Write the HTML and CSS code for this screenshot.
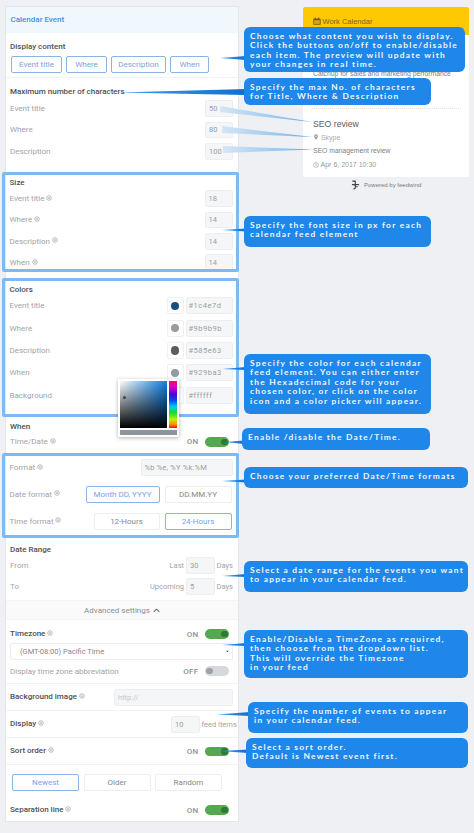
FILE: index.html
```html
<!DOCTYPE html>
<html lang="en">
<head>
<meta charset="utf-8">
<title>Calendar Event</title>
<link rel="stylesheet" href="styles.css">
</head>
<body>
<div class="page">
  <main class="panel">
    <h1 class="panel-title">Calendar Event</h1>

    <section class="sec sec-display">
      <h2 class="label">Display content</h2>
      <div class="btns">
        <span class="btn on w51">Event title</span>
        <span class="btn on w41">Where</span>
        <span class="btn on w55">Description</span>
        <span class="btn on w39">When</span>
      </div>
    </section>

    <section class="sec sec-max">
      <h2 class="label">Maximum number of characters</h2>
      <div class="row r1"><span class="txt">Event title</span><span class="input num">50</span></div>
      <div class="row r1"><span class="txt">Where</span><span class="input num">80</span></div>
      <div class="row r1"><span class="txt">Description</span><span class="input num">100</span></div>
    </section>

    <section class="frame frame-size">
      <h2 class="label">Size</h2>
      <div class="row r1"><span class="txt">Event title <svg class="help" viewBox="0 0 10 10"><circle cx="5" cy="5" r="3.8"/><circle class="dot" cx="5" cy="5" r="1.4"/></svg></span><span class="input num">18</span></div>
      <div class="row r1"><span class="txt">Where <svg class="help" viewBox="0 0 10 10"><circle cx="5" cy="5" r="3.8"/><circle class="dot" cx="5" cy="5" r="1.4"/></svg></span><span class="input num">14</span></div>
      <div class="row r1"><span class="txt">Description <svg class="help" viewBox="0 0 10 10"><circle cx="5" cy="5" r="3.8"/><circle class="dot" cx="5" cy="5" r="1.4"/></svg></span><span class="input num">14</span></div>
      <div class="row r1"><span class="txt">When <svg class="help" viewBox="0 0 10 10"><circle cx="5" cy="5" r="3.8"/><circle class="dot" cx="5" cy="5" r="1.4"/></svg></span><span class="input num">14</span></div>
    </section>

    <section class="frame frame-colors">
      <h2 class="label">Colors</h2>
      <div class="row r2"><span class="txt">Event title</span><span class="swatch"><i class="c1"></i></span><span class="input hex">#1c4e7d</span></div>
      <div class="row r2"><span class="txt">Where</span><span class="swatch"><i class="c2"></i></span><span class="input hex">#9b9b9b</span></div>
      <div class="row r2"><span class="txt">Description</span><span class="swatch"><i class="c3"></i></span><span class="input hex">#585e63</span></div>
      <div class="row r2"><span class="txt">When</span><span class="swatch"><i class="c4"></i></span><span class="input hex">#929ba3</span></div>
      <div class="row r2"><span class="txt">Background</span><span class="swatch"><i class="c5"></i></span><span class="input hex">#ffffff</span></div>
      <div class="picker">
        <div class="picker-top">
          <div class="picker-sat"><i class="picker-dot"></i></div>
          <div class="picker-hue"></div>
        </div>
        <div class="picker-bar"></div>
      </div>
    </section>

    <section class="sec sec-when">
      <h2 class="label">When</h2>
      <div class="row rt"><span class="txt">Time/Date <svg class="help" viewBox="0 0 10 10"><circle cx="5" cy="5" r="3.8"/><circle class="dot" cx="5" cy="5" r="1.4"/></svg></span><span class="state">ON</span><span class="toggle"></span></div>
    </section>

    <section class="frame frame-format">
      <div class="row rf1"><span class="txt">Format <svg class="help" viewBox="0 0 10 10"><circle cx="5" cy="5" r="3.8"/><circle class="dot" cx="5" cy="5" r="1.4"/></svg></span><span class="input fmt">%b %e, %Y %k:%M</span></div>
      <div class="row rf2"><span class="txt">Date format <svg class="help" viewBox="0 0 10 10"><circle cx="5" cy="5" r="3.8"/><circle class="dot" cx="5" cy="5" r="1.4"/></svg></span><span class="btn on w74">Month DD, YYYY</span><span class="btn w67">DD.MM.YY</span></div>
      <div class="row rf2"><span class="txt">Time format <svg class="help" viewBox="0 0 10 10"><circle cx="5" cy="5" r="3.8"/><circle class="dot" cx="5" cy="5" r="1.4"/></svg></span><span class="btn w66">12-Hours</span><span class="btn on w67">24-Hours</span></div>
    </section>

    <section class="sec sec-range">
      <h2 class="label">Date Range</h2>
      <div class="row r1"><span class="txt">From</span><span class="pre">Last</span><span class="input days">30</span><span class="post">Days</span></div>
      <div class="row r1"><span class="txt">To</span><span class="pre">Upcoming</span><span class="input days">5</span><span class="post">Days</span></div>
    </section>

    <div class="advanced">Advanced settings <svg class="chev" viewBox="0 0 10 6"><path d="M1 5 L5 1.2 L9 5"/></svg></div>

    <section class="sec sec-tz">
      <div class="row rt"><span class="label inline">Timezone <svg class="help" viewBox="0 0 10 10"><circle cx="5" cy="5" r="3.8"/><circle class="dot" cx="5" cy="5" r="1.4"/></svg></span><span class="state">ON</span><span class="toggle"></span></div>
      <div class="select"><span>(GMT-08:00) Pacific Time</span><svg class="caret" viewBox="0 0 6 4"><path d="M0.5 0.5 H5.5 L3 3.5 Z"/></svg></div>
      <div class="row rt abbr"><span class="txt">Display time zone abbreviation</span><span class="state">OFF</span><span class="toggle off"></span></div>
    </section>

    <section class="sec line"><div class="row rb"><span class="label inline">Background image <svg class="help" viewBox="0 0 10 10"><circle cx="5" cy="5" r="3.8"/><circle class="dot" cx="5" cy="5" r="1.4"/></svg></span><span class="input url">http://</span></div></section>
    <section class="sec line"><div class="row rb"><span class="label inline">Display <svg class="help" viewBox="0 0 10 10"><circle cx="5" cy="5" r="3.8"/><circle class="dot" cx="5" cy="5" r="1.4"/></svg></span><span class="input days">10</span><span class="post feed">feed items</span></div></section>
    <section class="sec line"><div class="row rb"><span class="label inline">Sort order <svg class="help" viewBox="0 0 10 10"><circle cx="5" cy="5" r="3.8"/><circle class="dot" cx="5" cy="5" r="1.4"/></svg></span><span class="state">ON</span><span class="toggle"></span></div></section>

    <section class="sec sec-sort">
      <div class="btns sort"><span class="btn on w67">Newest</span><span class="btn w67">Older</span><span class="btn w67">Random</span></div>
      <div class="row rt sep"><span class="label inline">Separation line <svg class="help" viewBox="0 0 10 10"><circle cx="5" cy="5" r="3.8"/><circle class="dot" cx="5" cy="5" r="1.4"/></svg></span><span class="state">ON</span><span class="toggle"></span></div>
    </section>
  </main>

  <aside class="preview">
    <div class="card">
      <div class="card-head">
        <svg class="cal" viewBox="0 0 10 10"><path d="M1 2h8a.6.6 0 0 1 .6.6V9a.6.6 0 0 1-.6.6H1A.6.6 0 0 1 .4 9V2.6A.6.6 0 0 1 1 2z"/><rect x="2.2" y=".6" width="1.3" height="2.2"/><rect x="6.5" y=".6" width="1.3" height="2.2"/><rect class="cal-in" x="1.4" y="4" width="7.2" height="4.6"/></svg>
        Work Calendar
      </div>
      <div class="card-body">
        <p class="ev-desc first">Catchup for sales and marketing performance</p>
        <div class="dots"></div>
        <p class="ev-title">SEO review</p>
        <p class="ev-where"><svg class="mini" viewBox="0 0 10 10"><path d="M5 .5a3.2 3.2 0 0 0-3.2 3.2C1.8 6 5 9.6 5 9.6S8.200 6 8.200 3.700A3.200 3.200 0 0 0 5 .5zm0 4.300a1.200 1.200 0 1 1 0-2.400 1.200 1.200 0 0 1 0 2.400z"/></svg> Skype</p>
        <p class="ev-desc">SEO management review</p>
        <p class="ev-when"><svg class="mini clock" viewBox="0 0 10 10"><circle cx="5" cy="5" r="4"/><path d="M5 2.600V5.200L6.800 6.200"/></svg> Apr 6, 2017 10:30</p>
      </div>
    </div>
    <div class="powered">
      <svg class="fw" viewBox="0 0 12 14"><path d="M1.500 1.500H6.500M3.500 1.500C5.500 1.500 6 3 6 4S5 6.500 3.500 6.500M1 6.500H6M6 6.500H11M3.500 6.500C5.500 6.500 6 8.500 6 9.500S5 12.500 3 12.500M6 9.500H9"/></svg>
      <span>Powered by feedwind</span>
    </div>
  </aside>

  <svg class="links" viewBox="0 0 474 833" aria-hidden="true">
    <defs>
      <linearGradient id="fade" x1="0" x2="1" y1="0" y2="0">
        <stop offset="0" stop-color="#d5e6f5"/>
        <stop offset="0.75" stop-color="#8fc0ee"/>
        <stop offset="1" stop-color="#3f8ddc"/>
      </linearGradient>
      <linearGradient id="solid" x1="0" x2="1" y1="0" y2="0">
        <stop offset="0" stop-color="#3f9cf0"/>
        <stop offset="1" stop-color="#0f6fd0"/>
      </linearGradient>
    </defs>
    <polygon fill="url(#fade)" points="220,106 312,122 220,112"/>
    <polygon fill="url(#fade)" points="222,126 312,137 222,133"/>
    <polygon fill="url(#fade)" points="223,146 313,149.500 223,153"/>
    <polygon fill="url(#solid)" points="220,58 246,56 246,60"/>
    <polygon fill="url(#solid)" points="118,92.500 246,89 246,95"/>
    <polygon fill="url(#solid)" points="222,230 246,228.500 246,231.500"/>
    <polygon fill="url(#solid)" points="222,369 246,367 246,370"/>
    <polygon fill="url(#solid)" points="225,442 244,440.500 244,444"/>
    <polygon fill="url(#solid)" points="222,481 246,479.500 246,482.500"/>
    <polygon fill="url(#solid)" points="222,576 246,574 246,577"/>
    <polygon fill="url(#solid)" points="222,645 246,643 246,646"/>
    <polygon fill="url(#solid)" points="217,714.500 250,712 250,716"/>
    <polygon fill="url(#solid)" points="220,751 248,749.500 248,753"/>
  </svg>

  <div class="note n1">Choose what content you wish to display.<br>Click the buttons on/off to enable/disable<br>each item. The preview will update with<br>your changes in real time.</div>
  <div class="note n2">Specify the max No. of characters<br>for Title, Where &amp; Description</div>
  <div class="note n3">Specify the font size in px for each<br>calendar feed element</div>
  <div class="note n4">Specify the color for each calendar<br>feed element. You can either enter<br>the Hexadecimal code for your<br>chosen color, or click on the color<br>icon and a color picker will appear.</div>
  <div class="note n5">Enable /disable the Date/Time.</div>
  <div class="note n6">Choose your preferred Date/Time formats</div>
  <div class="note n7">Select a date range for the events you want<br>to appear in your calendar feed.</div>
  <div class="note n8">Enable/Disable a TimeZone as required,<br>then choose from the dropdown list.<br>This will override the Timezone<br>in your feed</div>
  <div class="note n9">Specify the number of events to appear<br>in your calendar feed.</div>
  <div class="note n10">Select a sort order.<br>Default is Newest event first.</div>
</div>
</body>
</html>
```

FILE: styles.css
```css
* { box-sizing: border-box; }
html, body { margin: 0; padding: 0; }
body { background: #eef0f3; font-family: Roboto, "Liberation Sans", sans-serif; color: #a0a4a8; }
p, h1, h2 { margin: 0; font-weight: normal; }

.page { position: relative; width: 474px; height: 833px; overflow: hidden; display: flex; align-items: flex-start; padding: 6px 0 0 5px; }

/* left settings panel */
.panel { width: 234px; height: 816px; flex: none; background: #fff; border: 1px solid #e4e6e9; font-size: 8px; }
.panel-title { height: 26px; line-height: 25px; padding-left: 4.500px; background: #f0f7fd; color: #4a8fd8; font-size: 8px; font-weight: 500; }
.sec { padding: 0 5px 0 4px; }
.label { display: block; height: 12px; line-height: 12px; color: #4c4f53; font-size: 8px; font-weight: 500; }
.label.inline { display: inline-block; flex: 1; }
.txt { flex: 1; white-space: nowrap; }
.row { display: flex; align-items: center; }
.r1 { height: 16.500px; margin-bottom: 4.900px; }
.r2 { height: 17px; margin-bottom: 5.400px; }
.rt { height: 14px; }
.help { width: 6px; height: 6px; vertical-align: 0.5px; fill: none; stroke: #9aa0a5; stroke-width: 1.2; }
.help .dot { fill: #9aa0a5; stroke: none; }

.btns { display: flex; gap: 4px; }
.btn { display: flex; align-items: center; justify-content: center; height: 17px; flex: none; border: 1px solid #eceef0; border-radius: 2px; background: #fff; color: #85888c; font-size: 8px; white-space: nowrap; }
.btn.on { border-color: #8cb4e2; color: #7ba3dc; }
.w39 { width: 39px; } .w41 { width: 41px; } .w51 { width: 51px; } .w55 { width: 55px; }
.w66 { width: 66px; } .w67 { width: 67px; } .w74 { width: 74px; }

.input { display: flex; align-items: center; height: 100%; flex: none; background: #f5f6f7; border: 1px solid #eceef0; border-radius: 2px; padding-left: 3px; color: #9a9ea3; font-size: 7.500px; white-space: nowrap; }
.num { width: 28px; }
.hex { width: 47px; padding-left: 2px; letter-spacing: 0.500px; }
.fmt { width: 92px; letter-spacing: 0.200px; }
.days { width: 29px; }
.url { width: 119px; color: #c5c8cc; }

.sec-display { height: 45px; padding-top: 7.500px; border-bottom: 1px solid #f1f2f4; }
.sec-display .btns { margin: 3.500px 0 0 1px; }
.sec-max { height: 94px; padding-top: 8.300px; }
.sec-max .label { margin-bottom: 2px; }

/* blue highlight frames */
.frame { position: relative; margin: 0 -1px 0 -4px; padding: 0 3.500px 0 4.500px; border: 3.500px solid #7db9f2; border-radius: 2px; }
.frame-size { height: 100px; overflow: hidden; padding-top: 1.800px; }
.frame-size .label { margin-bottom: 1.500px; }
.frame-colors { height: 139px; margin-top: 6px; padding-top: 2.800px; }
.frame-colors .label { margin-bottom: 1.500px; }
.frame-format { height: 85px; padding-top: 3px; }
.frame-format .rf2 { padding-right: 1px; }
.swatch { display: flex; align-items: center; justify-content: center; width: 17px; height: 100%; flex: none; margin-right: 2px; background: #fff; border: 1px solid #eff0f2; border-radius: 2px; }
.swatch i { display: block; width: 8.500px; height: 8.500px; border-radius: 50%; }
.c1 { background: #1c4e7d; } .c2 { background: #9b9b9b; } .c3 { background: #585e63; } .c4 { background: #929ba3; } .c5 { background: #fff; }

.picker { position: absolute; left: 112.500px; top: 97.500px; width: 61px; height: 58px; padding: 2px; background: #fff; box-shadow: 0 1px 4px rgba(0,0,0,.3); z-index: 2; }
.picker-top { display: flex; gap: 2px; height: 47px; }
.picker-sat { position: relative; width: 47px; background: linear-gradient(to bottom, transparent, #000), linear-gradient(to right, #fff, #0a7fe6); }
.picker-dot { position: absolute; left: 3px; top: 15px; width: 3px; height: 3px; border-radius: 50%; background: #444; }
.picker-hue { width: 8px; background: linear-gradient(to bottom, #f01050 0%, #e000c0 12%, #5000e0 28%, #0050f0 42%, #00d0e0 55%, #10e030 68%, #c0f000 82%, #ff9000 92%, #f01000 100%); }
.picker-bar { height: 5px; margin-top: 2.500px; background: #8d949b; }

.sec-when { height: 36px; padding-top: 3.700px; }
.sec-when .label { margin-bottom: 2.300px; }
.state { color: #8e9296; font-size: 8px; font-weight: 500; margin-right: 6px; letter-spacing: 0.300px; }
.toggle { position: relative; width: 24px; height: 9.500px; flex: none; margin-right: 4.500px; border-radius: 5px; background: #55a84f; }
.toggle::after { content: ""; position: absolute; right: 1px; top: 1.500px; width: 6.500px; height: 6.500px; border-radius: 50%; background: #2b7a3a; }
.toggle.off { background: #d6d8db; }
.toggle.off::after { right: auto; left: 1.500px; background: #9fa2a5; }

.rf1 { height: 17px; margin-bottom: 9.500px; }
.rf2 { height: 17px; margin-bottom: 10px; gap: 5px; }

.sec-range { height: 62px; padding-top: 5.700px; }
.sec-range .label { margin-bottom: 1.500px; }
.sec-range .r1 { margin-bottom: 4.500px; }
.pre { margin-right: 2px; font-size: 7.500px; }
.post { width: 16.500px; margin-left: 1.500px; font-size: 7.500px; text-align: left; white-space: nowrap; }
.post.feed { width: 31.500px; }

.advanced { display: flex; align-items: center; justify-content: center; gap: 3px; height: 20px; background: #fafafa; border-top: 1px solid #f3f4f5; border-bottom: 1px solid #f3f4f5; color: #8a8e92; font-size: 8px; }
.chev { width: 7px; height: 5px; fill: none; stroke: #666a6e; stroke-width: 1.500; }

.sec-tz { height: 63.500px; padding-top: 7px; border-bottom: 1px solid #f1f2f4; }
.select { display: flex; align-items: center; justify-content: space-between; height: 17px; margin-top: 2px; padding: 0 3px 0 9px; background: #fff; border: 1px solid #eceef0; border-radius: 2px; font-size: 7.500px; color: #85888c; }
.caret { width: 3px; height: 3px; fill: #444; }
.abbr { margin-top: 4px; }

.line { padding-top: 5.500px; height: 27px; border-bottom: 1px solid #f1f2f4; }
.rb { height: 16.500px; }

.sec-sort { padding-top: 9.500px; }
.sort { margin-left: 2px; gap: 4.500px; }
.sep { margin-top: 12px; }

/* preview column */
.preview { width: 166px; margin: 1px 0 0 64px; flex: none; }
.card { height: 170px; background: #fff; border-radius: 2px; overflow: hidden; }
.card-head { display: flex; align-items: center; gap: 2px; height: 28px; padding-left: 9.500px; background: #fec902; color: #7a6420; font-family: "Liberation Sans", sans-serif; font-size: 7.500px; }
.cal { width: 8px; height: 8px; fill: #7a5c10; }
.cal-in { fill: #d8a510; }
.card-body { padding: 34px 10px 0; font-family: "Liberation Sans", sans-serif; }
.card-body p { white-space: nowrap; }
.dots { height: 0; margin: 29px -2px 0 -1px; border-top: 1px dotted #dfe1e4; }
.ev-desc { font-size: 6.800px; line-height: 10px; color: #7b8086; }
.ev-title { margin-top: 9px; font-size: 8.700px; line-height: 12px; color: #585e63; }
.ev-where { margin-top: 1.500px; font-size: 7px; line-height: 11px; color: #a8abae; margin-bottom: 3px; }
.ev-when { margin-top: 3.500px; font-size: 7px; line-height: 11px; color: #929ba3; }
.mini { width: 6px; height: 6px; fill: #9b9b9b; vertical-align: -0.500px; }
.clock { fill: none; stroke: #929ba3; stroke-width: 1; }
.powered { display: flex; align-items: center; gap: 4px; margin: 3px 0 0 48px; color: #777c82; font-size: 6px; font-family: "Liberation Sans", sans-serif; white-space: nowrap; }
.fw { width: 9px; height: 10px; fill: none; stroke: #44484c; stroke-width: 1.600; }

/* overlays: tutorial connectors and callouts */
.links { position: absolute; left: 0; top: 0; width: 474px; height: 833px; pointer-events: none; }
.note { position: absolute; padding: 5px 6px; background: #1f87ea; border-radius: 6px; color: #f0f6fd; font-family: Lato, "Liberation Sans", sans-serif; font-size: 8.400px; font-weight: 700; line-height: 9.400px; letter-spacing: 1.250px; white-space: nowrap; }
.n1 { left: 244px; top: 27px; width: 221px; height: 45px; }
.n2 { left: 244px; top: 78px; width: 187px; height: 27px; }
.n3 { left: 244px; top: 216px; width: 187px; height: 31px; }
.n4 { left: 244px; top: 354px; width: 187px; height: 60px; }
.n5 { left: 242px; top: 428px; width: 188px; height: 22px; }
.n6 { left: 244px; top: 467px; width: 224px; height: 21px; }
.n7 { left: 244px; top: 561px; width: 224px; height: 31px; }
.n8 { left: 244px; top: 630px; width: 224px; height: 48px; }
.n9 { left: 248px; top: 702px; width: 220px; height: 31px; }
.n10 { left: 246px; top: 738px; width: 222px; height: 30px; }
```
